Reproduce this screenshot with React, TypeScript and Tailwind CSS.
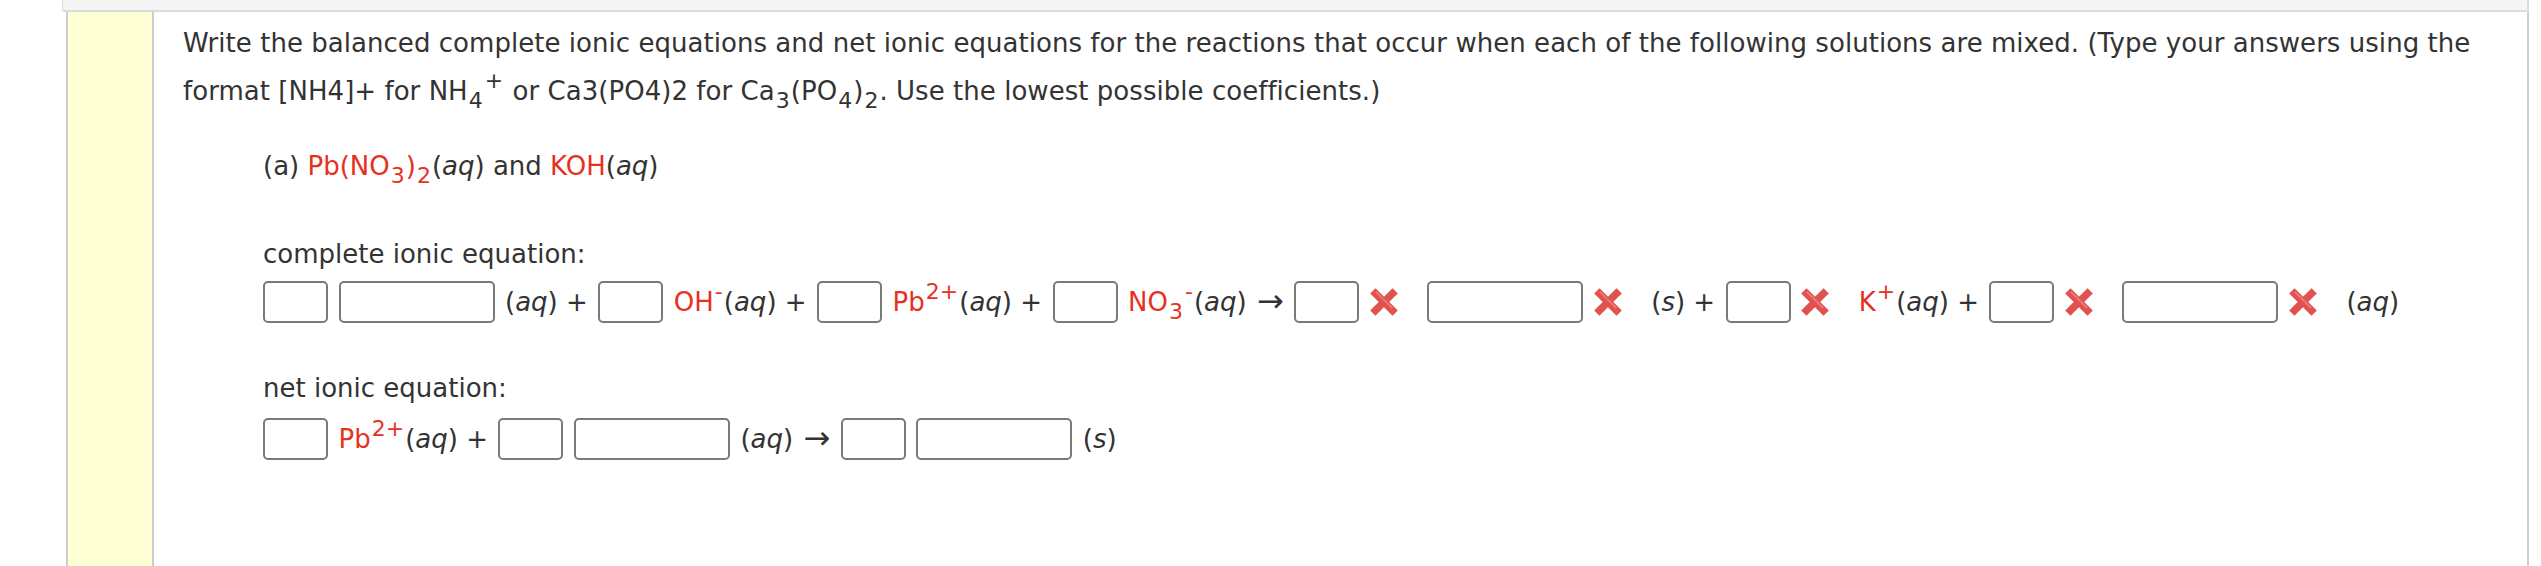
import React from 'react';

const RED = 'text-[#e8301f]';

function Box({ wide }: { wide?: boolean }) {
  return (
    <span
      className={`inline-block h-[42px] shrink-0 rounded-[5px] border-2 border-[#7a7a7a] bg-white ${
        wide ? 'w-[156px]' : 'w-[65px]'
      }`}
    />
  );
}

function Wrong() {
  return (
    <svg width="32" height="32" viewBox="0 0 30 30" className="ml-[-2px] mr-[17px] shrink-0">
      <g strokeLinecap="square">
        <line x1="7" y1="7" x2="23" y2="23" stroke="#e0524f" strokeWidth="7" />
        <line x1="23" y1="7" x2="7" y2="23" stroke="#e0524f" strokeWidth="7" />
        <line x1="8" y1="6" x2="22" y2="20" stroke="#f29a96" strokeWidth="2" opacity="0.5" />
      </g>
    </svg>
  );
}

const Aq = () => (
  <>
    (<i>aq</i>)
  </>
);

const Arrow = () => <span className="relative top-[1px] ml-[2px] text-[32px] leading-none">→</span>;

const Sup = ({ children }: { children: React.ReactNode }) => (
  <sup className="relative top-[-2px] mx-[1px] text-[22px] leading-none align-super">{children}</sup>
);

const Sub = ({ children }: { children: React.ReactNode }) => (
  <sub className="relative top-[2px] mx-[1px] text-[22px] leading-none align-sub">{children}</sub>
);

function T({ children }: { children: React.ReactNode }) {
  return <span className="shrink-0 whitespace-pre">{children}</span>;
}

export default function App() {
  return (
    <div className="h-[566px] w-[2541px] overflow-hidden bg-white font-['DejaVu_Sans',Verdana,sans-serif] text-[26px] text-[#333]">
      <div className="ml-[62px] h-[12px] w-[2467px] rounded-bl-[3px] border-b-2 border-l border-r-2 border-[#dcdcdc] bg-[#f5f5f5]" />
      <div className="ml-[66px] flex h-[554px] w-[2463px] border-r-2 border-[#cfcfcf]">
        <div className="w-[88px] shrink-0 border-x-2 border-[#cccccc] bg-[#ffffd5]" />
        <div className="pl-[29px] pt-[7px]">
          <p className="leading-[48px] tracking-[0.04px]">
            Write the balanced complete ionic equations and net ionic equations for the reactions that occur when
            each of the following solutions are mixed. (Type your answers using the
            <br />
            format [NH4]+ for NH<Sub>4</Sub>
            <Sup>+</Sup> or Ca3(PO4)2 for Ca<Sub>3</Sub>(PO<Sub>4</Sub>)<Sub>2</Sub>. Use the lowest possible
            coefficients.)
          </p>

          <div className="ml-[80px]">
            <p className="mt-[27px] leading-[48px]">
              (a){' '}
              <span className={RED}>
                Pb(NO<Sub>3</Sub>)<Sub>2</Sub>
              </span>
              <Aq /> and <span className={RED}>KOH</span>
              <Aq />
            </p>

            <p className="mt-[40px] leading-[48px]">complete ionic equation:</p>
            <div className="mt-[3px] flex h-[42px] items-center gap-[10.5px]">
              <Box />
              <Box wide />
              <T>
                <Aq /> +
              </T>
              <Box />
              <T>
                <span className={RED}>
                  OH<Sup>-</Sup>
                </span>
                <Aq /> +
              </T>
              <Box />
              <T>
                <span className={RED}>
                  Pb<Sup>2+</Sup>
                </span>
                <Aq /> +
              </T>
              <Box />
              <T>
                <span className={RED}>
                  NO<Sub>3</Sub>
                  <Sup>-</Sup>
                </span>
                <Aq /> <Arrow />
              </T>
              <Box />
              <Wrong />
              <Box wide />
              <Wrong />
              <T>
                (<i>s</i>) +
              </T>
              <Box />
              <Wrong />
              <T>
                <span className={RED}>
                  K<Sup>+</Sup>
                </span>
                <Aq /> +
              </T>
              <Box />
              <Wrong />
              <Box wide />
              <Wrong />
              <T>
                <Aq />
              </T>
            </div>

            <p className="mt-[41px] leading-[48px]">net ionic equation:</p>
            <div className="mt-[6px] flex h-[42px] items-center gap-[10.5px]">
              <Box />
              <T>
                <span className={RED}>
                  Pb<Sup>2+</Sup>
                </span>
                <Aq /> +
              </T>
              <Box />
              <Box wide />
              <T>
                <Aq /> <Arrow />
              </T>
              <Box />
              <Box wide />
              <T>
                (<i>s</i>)
              </T>
            </div>
          </div>
        </div>
      </div>
    </div>
  );
}
